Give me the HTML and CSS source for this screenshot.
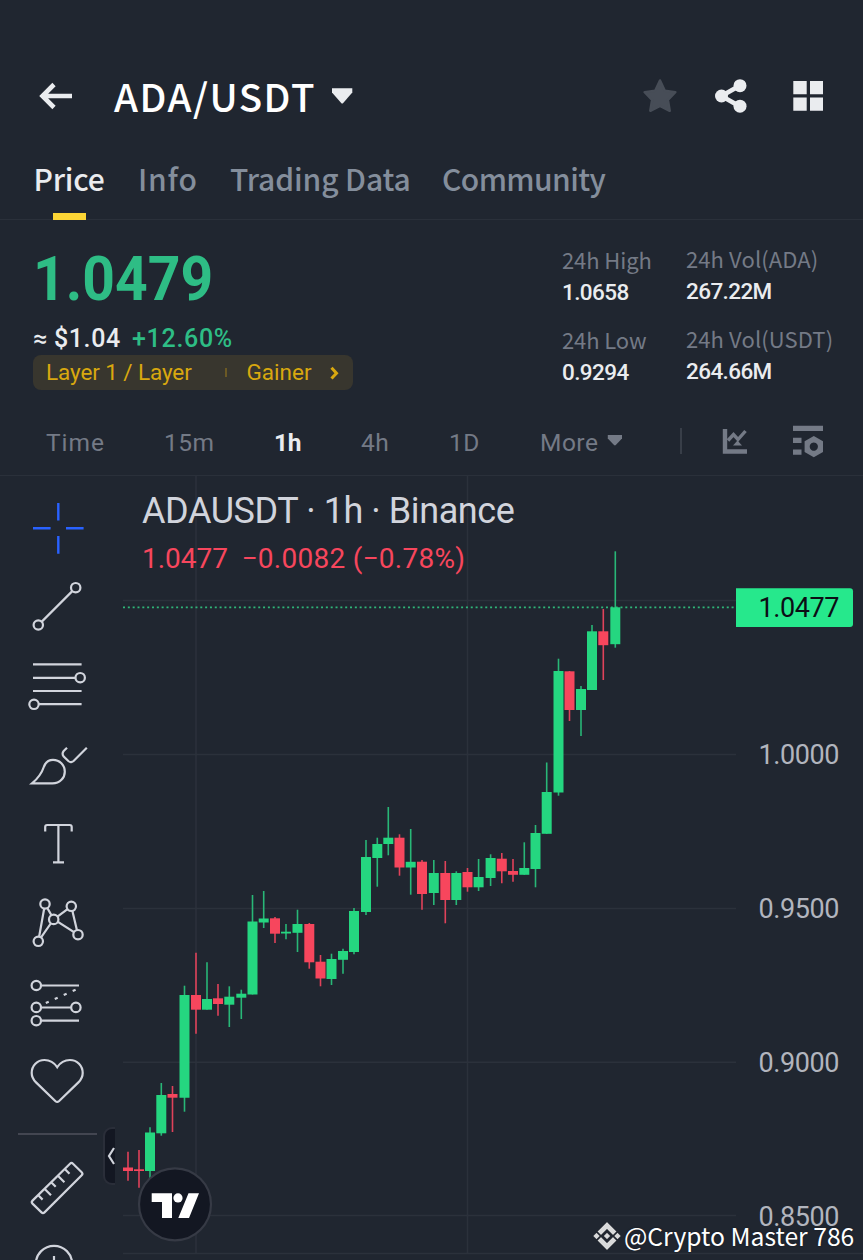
FILE: index.html
```html
<!DOCTYPE html>
<html lang="en">
<head>
<meta charset="utf-8">
<title>ADA/USDT</title>
<link rel="stylesheet" href="styles.css">
</head>
<body>
<header class="topbar">
  <svg class="back" width="36" height="30" viewBox="38 81 36 30"><path d="M72 96H43M54 84.500L42.500 96L54 107.500" fill="none" stroke="#eaecef" stroke-width="4.600"/></svg>
  <h1 class="pair">ADA/USDT</h1>
  <svg class="pair-caret" width="22" height="18" viewBox="331 87 22 18"><path d="M332 88.200H352.300V92.600L343.200 103Q342.200 104 341.200 103L332 92.600Z" fill="#eaecef"/></svg>
  <div class="actions">
    <svg width="34" height="36" viewBox="643 78 34 36"><path d="M660 80.500L664.800 90.700L675.300 92.200L667.900 100L669.700 110.800L660 105.800L650.300 110.800L652.100 100L644.700 92.200L655.200 90.700Z" fill="#474d57" stroke="#474d57" stroke-width="2.500" stroke-linejoin="round"/></svg>
    <svg width="34" height="36" viewBox="714 78 34 36"><path d="M740 85.500L721.500 96L740 106.500" fill="none" stroke="#eaecef" stroke-width="4.600"/><g fill="#eaecef"><circle cx="740" cy="85.700" r="6.500"/><circle cx="721.500" cy="96" r="6.500"/><circle cx="740" cy="106.200" r="6.500"/></g></svg>
    <svg width="32" height="32" viewBox="792 80 32 32"><path d="M793.300 81H806.700V94.200H793.300ZM810 81H823V94.200H810ZM793.300 97.500H806.700V110.700H793.300ZM810 97.500H823V110.700H810Z" fill="#eaecef"/></svg>
  </div>
</header>
<nav class="tabs">
  <a class="tab active">Price</a>
  <a class="tab">Info</a>
  <a class="tab">Trading Data</a>
  <a class="tab">Community</a>
</nav>
<section class="summary">
  <div class="quote">
    <div class="last">1.0479</div>
    <div class="fiat"><span class="approx">≈</span><span class="usd">$1.04</span><span class="pct">+12.60%</span></div>
    <div class="tag"><span class="layer">Layer 1 / Layer</span><i class="bar"></i><span class="gainer">Gainer</span><svg width="10" height="16" viewBox="329 364 10 16"><path d="M331.500 366.800L336.500 372.200L331.500 377.600" fill="none" stroke="#d9a80f" stroke-width="3"/></svg></div>
  </div>
  <dl class="stats">
    <dt>24h High</dt><dd>1.0658</dd>
    <dt>24h Low</dt><dd>0.9294</dd>
  </dl>
  <dl class="stats volume">
    <dt>24h Vol(ADA)</dt><dd>267.22M</dd>
    <dt>24h Vol(USDT)</dt><dd>264.66M</dd>
  </dl>
</section>
<div class="intervals">
  <span>Time</span><span>15m</span><span class="on">1h</span><span>4h</span><span>1D</span>
  <span class="more">More<svg width="16" height="12" viewBox="608 434 16 12"><path d="M608.800 435H623V438.500L616.800 445Q615.900 445.800 615 445L608.800 438.500Z" fill="#747a86"/></svg></span>
  <i class="rule"></i>
  <svg width="26" height="26" viewBox="722 428 26 26"><path d="M725 429V451.500H747" fill="none" stroke="#747a86" stroke-width="4.400"/><path d="M728 440.500L733.500 434.500L738 439.500L745.500 431" fill="none" stroke="#747a86" stroke-width="3.400"/><path d="M733 445.500L737.500 440.500L742 445.500Z" fill="#747a86"/></svg>
  <svg width="32" height="34" viewBox="792 424.500 32 34"><g fill="#747a86"><path d="M793 426.200H823V431.500H793ZM793 438.200H801.500V443.500H793ZM793 450H801.500V455.300H793Z"/><path fill-rule="evenodd" d="M813.800 436.500L823 441.800V452.400L813.800 457.700L804.600 452.400V441.800ZM813.800 443A4.100 4.100 0 1 0 813.810 443Z"/></g></svg>
</div>
<main class="chart">
  <aside class="tools">
    <svg width="123" height="79" viewBox="0 488 123 79"><path stroke="#2962ff" stroke-width="2.400" d="M58.300 503V520.500M58.300 536V553.700M33 528.300H50.600M66 528.300H83.600"/></svg>
    <svg width="123" height="79" viewBox="0 567 123 79"><path d="M72.300 591.100L41.800 621.600"/><circle cx="75.700" cy="587.700" r="4.700"/><circle cx="38.300" cy="625" r="4.700"/></svg>
    <svg width="123" height="79" viewBox="0 646 123 79"><path d="M33 664.300H81.600M33 677.800H75.500M33 691H81.600M38.700 704.200H81.600"/><circle cx="80.200" cy="677.700" r="4.700"/><circle cx="34" cy="704.300" r="4.700"/></svg>
    <svg width="123" height="79" viewBox="0 725 123 79"><path d="M32 783.400H52.500C60 783.400 64.800 777.800 64.800 771.700C64.800 765 59.600 759.800 53 759.800C48 759.800 45.300 763 44 766.500C42 772.500 38.500 778 32 783.400ZM67 747.700L63.700 751Q61.500 753.700 63.700 756.500L68.300 761Q71 763.300 73.600 761L86.800 747.700"/></svg>
    <svg width="123" height="79" viewBox="0 804 123 79"><path d="M45.200 831.500V827Q45.200 825 47.200 825H69.700Q71.700 825 71.700 827V831.500M58.400 825V862.300M53 862.300H64"/></svg>
    <svg width="123" height="79" viewBox="0 883 123 79"><path d="M45 904L38.300 941.300L53.700 919.300ZM53.700 919.300L71.300 906.300L78 934.700Z"/><g class="knob"><circle cx="45" cy="904" r="4.700"/><circle cx="71.300" cy="906.300" r="4.700"/><circle cx="53.700" cy="919.400" r="4.700"/><circle cx="78" cy="934.700" r="4.700"/><circle cx="38.300" cy="941.300" r="4.700"/></g></svg>
    <svg width="123" height="79" viewBox="0 962 123 79"><path d="M41 985.500H79M41 1007.500H71.500M41 1020.700H79"/><path stroke-dasharray="3.200 6.600" d="M45.800 1003L76 989.600"/><circle cx="36.300" cy="985.500" r="4.700"/><circle cx="36.300" cy="1007.400" r="4.700"/><circle cx="75.900" cy="1007.400" r="4.700"/><circle cx="36.300" cy="1020.700" r="4.700"/></svg>
    <svg width="123" height="79" viewBox="0 1041 123 79"><path d="M57.200 1067.200C54 1062.300 49.500 1060 44.500 1060C37.300 1060 31.700 1065.600 31.700 1073C31.700 1077 33.200 1079.600 36 1082.400L55.500 1101.200Q57.200 1102.700 58.900 1101.200L78.400 1082.400C81.200 1079.600 82.700 1077 82.700 1073C82.700 1065.600 77.100 1060 69.900 1060C64.900 1060 60.400 1062.300 57.200 1067.200Z"/></svg>
    <hr class="tools-rule">
    <svg width="123" height="80" viewBox="0 1148 123 80"><path d="M70 1163.700Q71.500 1162.200 73 1163.700L81.700 1172.200Q83.200 1173.700 81.700 1175.200L44.500 1212.400Q43 1213.900 41.500 1212.400L32.500 1203.600Q31 1202.100 32.500 1200.600ZM38.800 1195.800L42.600 1199.600M45 1189.300L51 1195.300M51.700 1182.800L55.700 1186.800M58.400 1176.300L64.400 1182.300M65.300 1169.500L69.500 1173.700"/></svg>
    <svg width="123" height="32" viewBox="0 1228 123 32"><circle cx="54" cy="1264" r="18.200"/><path d="M54 1256V1272"/></svg>
    <button class="collapse"><svg width="8" height="18" viewBox="107 1148 8 18"><path d="M114 1149L109 1157L114 1165"/></svg></button>
  </aside>
  <div class="plot">
    <svg id="plot" width="740" height="784" viewBox="123 476 740 784">
      <path class="grid" d="M123 600.500H736M123 754.500H736M123 908.500H736M123 1062.300H736M123 1215.500H736M123 1253.500H863M196 476V1253M467.500 476V1253"/>
      <path class="price-line" d="M123 607.400H736"/>
      <g id="candles"></g>
      <path d="M736 588.300H850Q853 588.300 853 591.300V624Q853 627 850 627H736Z" fill="#26e88c"/>
      <g class="axis">
        <text class="now" x="758.500" y="617.300" textLength="81">1.0477</text>
        <text x="758.500" y="764.300" textLength="81">1.0000</text>
        <text x="758.500" y="918" textLength="81">0.9500</text>
        <text x="758.500" y="1071.900" textLength="81">0.9000</text>
        <text x="758.500" y="1225.500" textLength="81">0.8500</text>
      </g>
    </svg>
    <div class="legend">
      <div class="symbol">ADAUSDT · 1h · Binance</div>
      <div class="change"><span>1.0477</span><span>−0.0082 (−0.78%)</span></div>
    </div>
    <svg class="tv" width="76" height="76" viewBox="137 1166 76 76"><circle cx="175" cy="1204.300" r="36" fill="#131722" stroke="#363a45" stroke-width="2.200"/><g fill="#fff"><path d="M151.700 1193.300H172V1218H162V1202H151.700ZM188.500 1193.300H199L189 1218H178.300Z"/><circle cx="178" cy="1197.900" r="4.600"/></g></svg>
  </div>
</main>
<div class="watermark">
  <svg width="30" height="30" viewBox="592 1221 30 30"><g fill="#d9dadb" stroke="#111" stroke-opacity=".35" stroke-width=".5"><path d="M607 1222L616.500 1231.500L613 1235L607 1229L601 1235L597.500 1231.500ZM607 1250L616.500 1240.500L613 1237L607 1243L601 1237L597.500 1240.500ZM607 1232.700L610.300 1236L607 1239.300L603.700 1236ZM596.500 1232.700L599.800 1236L596.500 1239.300L593.200 1236ZM617.500 1232.700L620.800 1236L617.500 1239.300L614.200 1236Z"/></g></svg>
  <span>@Crypto Master 786</span>
</div>
<script src="chart.js"></script>
</body>
</html>
```
FILE: styles.css
```css
* { box-sizing: border-box; margin: 0; padding: 0; }
body {
  position: relative;
  width: 863px;
  height: 1260px;
  overflow: hidden;
  background: #202630;
  color: #eaecef;
  font-family: "Noto Sans CJK SC", sans-serif;
}
svg { display: block; flex: none; }

.topbar { display: flex; align-items: center; height: 128px; padding: 64px 39px 0 38px; }
.pair { margin-left: 40px; padding-bottom: 2px; width: 204px; font-size: 38.500px; line-height: 60px; font-weight: 500; letter-spacing: 1.500px; color: #fff; white-space: nowrap; }
.pair-caret { margin-left: 13px; }
.actions { display: flex; align-items: center; margin-left: auto; }
.actions svg + svg { margin-left: 37px; }
.actions svg:last-child { margin-left: 44px; }

.tabs { display: flex; gap: 32px; height: 92px; padding: 30px 0 0 33.500px; border-bottom: 1px solid #2a303a; }
.tab { display: flex; flex-direction: column; width: 72px; font-size: 30px; line-height: 40px; font-weight: 500; letter-spacing: -.2px; color: #848e9c; white-space: nowrap; }
.tab:nth-child(2) { width: 60px; margin-left: .5px; letter-spacing: .8px; }
.tab:nth-child(3) { width: 180px; letter-spacing: -.1px; }
.tab:nth-child(4) { letter-spacing: -.6px; }
.tab.active { color: #eaecef; }
.tab.active::after { content: ""; width: 33px; height: 7px; margin: auto auto -1px; background: #fcd535; }

.summary { display: flex; height: 186px; }
.quote { width: 562px; padding: 29px 0 0 33px; flex: none; font-family: Roboto, sans-serif; }
.last { height: 60px; font-size: 62px; line-height: 60px; font-weight: 700; color: #2ebd85; transform: scaleX(.92); transform-origin: 0 0; }
.fiat { display: flex; margin-top: 12.500px; font-size: 25px; line-height: 33.500px; font-weight: 500; white-space: nowrap; }
.approx { width: 21px; }
.usd { width: 78px; letter-spacing: .6px; }
.pct { color: #2ebd85; letter-spacing: .7px; }
.tag { display: flex; align-items: center; width: 320px; height: 35px; padding: 0 14px 0 13px; border-radius: 8px; background: #38362e; color: #d9a80f; font-size: 22.500px; line-height: 35px; white-space: nowrap; }
.layer { width: 179px; letter-spacing: -.1px; }
.bar { width: 1.500px; height: 9px; margin: 0 20px 0 0; background: #6b5924; }
.gainer { width: 82px; }
.stats { width: 124px; padding-top: 24px; font-size: 22px; line-height: 31px; white-space: nowrap; }
.stats.volume { width: auto; padding-top: 23px; }
.stats dt { color: #747a86; letter-spacing: -.1px; }
.stats.volume dt { letter-spacing: .1px; }
.stats dd { margin-bottom: 15px; font-family: Roboto, sans-serif; font-size: 22.500px; line-height: 34px; font-weight: 500; letter-spacing: -.6px; }

.intervals { display: grid; grid-template-columns: 118px 110px 87px 88px 91px 140px 42px 70px 32px; align-items: center; height: 70px; padding-left: 46px; border-bottom: 1px solid #2a303a; font-family: Roboto, sans-serif; font-size: 24.500px; line-height: 36px; color: #747a86; letter-spacing: .5px; }
.intervals span { padding-top: 4px; }
.intervals span:first-child { letter-spacing: 1px; }
.intervals .on { color: #eaecef; font-weight: 700; letter-spacing: -.3px; }
.more { display: flex; align-items: center; }
.more svg { margin: 0 0 5px 9px; }
.rule { width: 1.500px; height: 26px; background: #383e48; }

.chart { display: flex; height: 784px; }
.tools { position: relative; display: flex; flex-direction: column; width: 123px; padding-top: 12px; flex: none; }
.tools svg { fill: none; stroke: #d1d4dc; stroke-width: 2.200px; }
.knob { fill: #202630; }
.tools-rule { width: 79px; height: 2px; margin: 13px 0 13px 18px; border: 0; background: #434651; flex: none; }
.collapse { position: absolute; left: 102.500px; top: 651px; display: flex; align-items: center; justify-content: flex-end; width: 12px; height: 58px; border: 2px solid #2a2e39; border-right: 0; border-radius: 9px 0 0 9px; background: #131722; }
.plot { position: relative; width: 740px; }
.grid { stroke: #2b313b; stroke-width: 1.500px; }
.price-line { stroke: #2fb578; stroke-width: 1.600px; stroke-dasharray: 2 2.830; }
.axis { font: 27px Roboto, sans-serif; fill: #b2b5be; }
.axis .now { fill: #0c0e15; }
.legend { position: absolute; left: 19px; top: 12px; font-family: Roboto, sans-serif; white-space: nowrap; }
.symbol { font-size: 36px; line-height: 46px; letter-spacing: -.42px; color: #d1d4dc; }
.change { display: flex; margin-top: 7px; font-size: 28px; line-height: 36px; color: #f7465d; }
.change span:first-child { width: 99.500px; }
.change span:last-child { letter-spacing: .27px; }
.tv { position: absolute; left: 14px; top: 690px; }

.watermark { position: absolute; left: 592px; top: 1216px; display: flex; align-items: center; gap: 2px; color: #fff; font-size: 24.700px; line-height: 38px; white-space: nowrap; text-shadow: 0 0 2px #0006; }
.watermark svg { margin-top: 1px; }
```
FILE: chart.js
```js
// [x, high, body top, body bottom, low, rising]
const candles = [
  [128,1151.7,1167.5,1171,1180.7,0],[139,1150,1169.3,1171,1187.7,0],[150,1127.3,1132.5,1171,1179,1],
  [161.3,1083,1095,1133.3,1135.7,1],[172.5,1086,1094,1097.7,1132,0],[184.5,985.7,995,1097.7,1111.7,1],
  [196,952.7,995,1009.7,1033.7,0],[207,962.3,999,1009.7,1009.7,1],[218,984,998.3,1004,1015.7,0],
  [229.3,986.3,996.7,1004.7,1027,1],[241.3,989.7,993.7,997.7,1019,1],[252.5,895,921.5,994.5,994.5,1],
  [263.7,891,918.5,922.5,928,1],[275,917,918.3,933.7,943,0],[286,924,931.7,933.5,939.3,1],
  [297.5,909.7,924,932.8,952,1],[309.3,923,924,962.3,968.7,0],[320.5,955,961.7,978.5,986.3,0],
  [331.5,953.7,959,979,985,1],[343,948.7,951,959.8,973.7,1],[354,908,911,952,954.3,1],
  [366,840,857,912,915,1],[377.3,837.7,844,858,886.7,1],[388.3,807,837.7,844,855.3,1],
  [399.5,834.3,837.7,867.5,875.7,0],[410.7,829,861.8,867.5,894.7,1],[422,860,861.7,894,909.7,0],
  [433.8,860,873,893,905,1],[445.3,861,873,900,923.3,0],[456.3,871.3,873,900,905,1],
  [467.5,868,872,887.3,891.7,0],[478.6,859,877,887.3,891,1],[490.6,854.3,858,878,886,1],
  [501.8,853,858.7,871.3,883.3,0],[513,859,871,874.8,881.7,0],[524.3,842.3,868,874.8,874.8,1],
  [535.5,825,833,869,887.3,1],[546.7,762.5,792,833.8,833.8,1],[558.5,658.7,671,792.5,795.7,1],
  [569.5,671,671.3,710,721,0],[581,686,689,710,736,1],[592,625,631.3,690,690,1],
  [603.3,609,631.3,645.2,680,0],[615.3,551.3,607.3,644.2,647.7,1]
];
const layer = document.getElementById("candles");
for (const [x, high, top, bottom, low, up] of candles) {
  const draw = (d, fill) => {
    const path = document.createElementNS("http://www.w3.org/2000/svg", "path");
    path.setAttribute("d", d);
    path.setAttribute("fill", fill);
    layer.append(path);
  };
  draw(`M${x - .8} ${high}h1.6V${low}h-1.6Z`, up ? "#28b777" : "#e0425a");
  draw(`M${x - 5} ${top}h10V${bottom}h-10Z`, up ? "#25d680" : "#f7465d");
}
```
